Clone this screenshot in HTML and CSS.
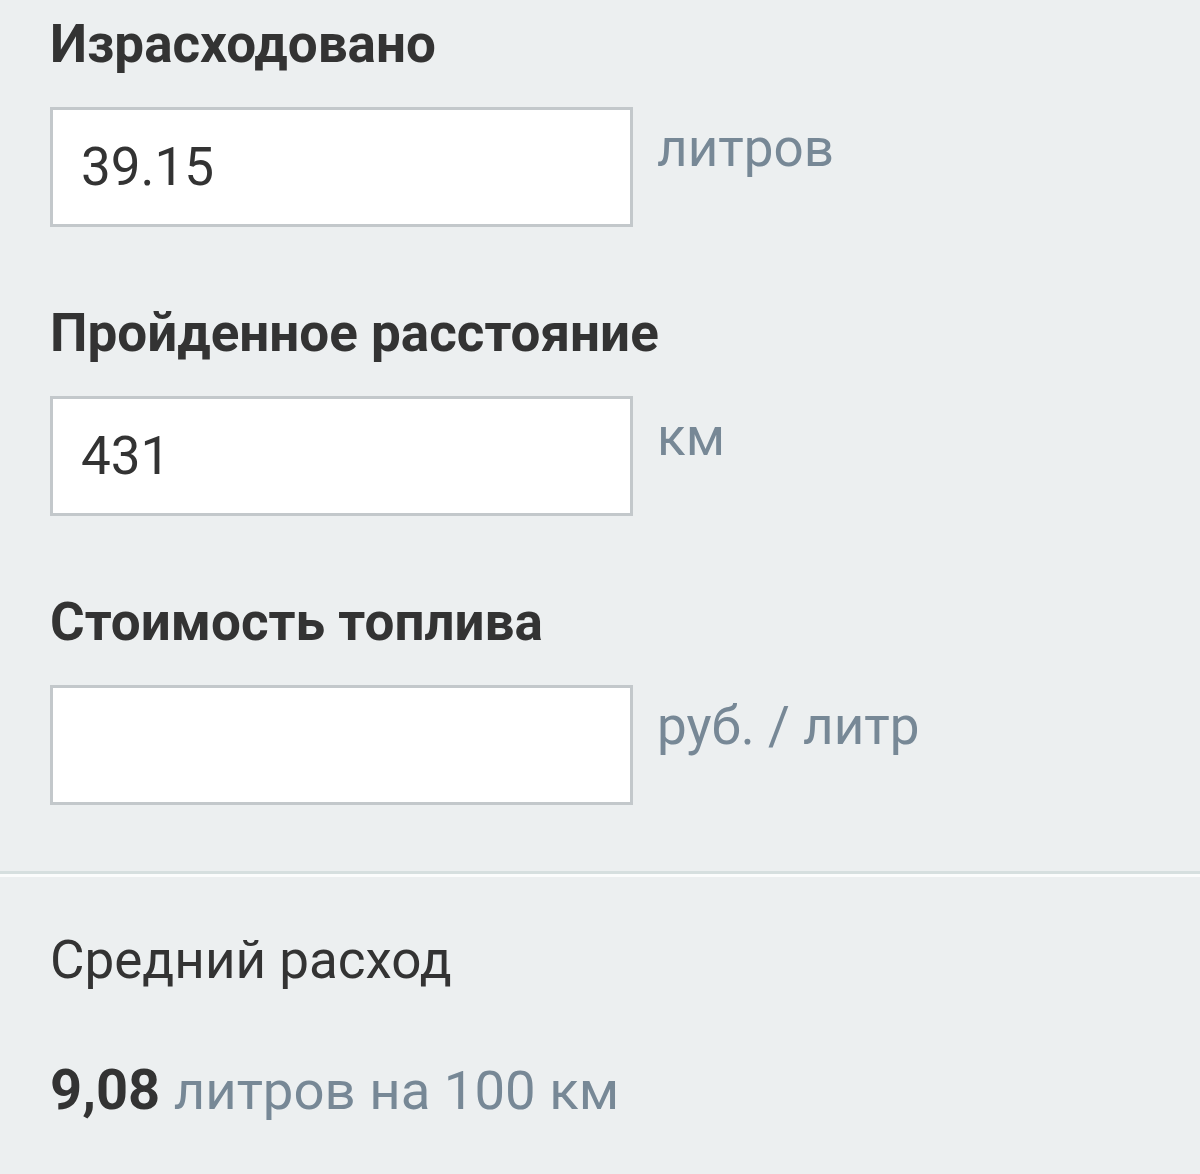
FILE: index.html
```html
<!DOCTYPE html>
<html lang="ru">
<head>
    <meta charset="UTF-8">
    <title>Расход топлива</title>
    <link rel="stylesheet" href="styles.css">
</head>
<body>
    <div class="calc-form">
        <div class="field">
            <label class="field-label" for="fuel">Израсходовано</label>
            <div class="field-row">
                <input class="field-input" type="text" id="fuel" value="39.15">
                <span class="field-unit">литров</span>
            </div>
        </div>
        <div class="field">
            <label class="field-label" for="distance">Пройденное расстояние</label>
            <div class="field-row">
                <input class="field-input" type="text" id="distance" value="431">
                <span class="field-unit">км</span>
            </div>
        </div>
        <div class="field">
            <label class="field-label" for="price">Стоимость топлива</label>
            <div class="field-row">
                <input class="field-input" type="text" id="price" value="">
                <span class="field-unit">руб. / литр</span>
            </div>
        </div>
    </div>
    <div class="divider"></div>
    <div class="result">
        <div class="result-title">Средний расход</div>
        <div class="result-value"><b>9,08</b> литров на 100 км</div>
    </div>
</body>
</html>
```

FILE: styles.css
```css
body {
    margin: 0;
    padding: 0;
    background: #eceff0;
    font-family: Roboto, "Liberation Sans", sans-serif;
    color: #333;
}
.calc-form {
    padding: 14px 50px 0 50px;
}
.field {
    margin-bottom: 76px;
}
.field:last-child {
    margin-bottom: 0;
}
.field-label {
    display: block;
    font-size: 53px;
    font-weight: bold;
    line-height: 60px;
    margin-bottom: 33px;
    color: #333;
}
.field-row {
    display: flex;
    align-items: flex-start;
}
.field-input {
    box-sizing: border-box;
    width: 583px;
    height: 120px;
    border: 3px solid #c3c8cb;
    background: #fff;
    padding: 0 0 0 28px;
    margin: 0;
    font-family: Roboto, "Liberation Sans", sans-serif;
    font-size: 53px;
    color: #333;
    outline: none;
    border-radius: 0;
}
.field-unit {
    margin-left: 24px;
    padding-top: 9px;
    font-size: 53px;
    line-height: 64px;
    color: #778896;
}
.divider {
    margin-top: 66px;
    border-top: 3px solid #d6dfdf;
    border-bottom: 3px solid #fbfcfc;
}
.result {
    padding: 53px 50px 0 50px;
}
.result-title {
    font-size: 53px;
    line-height: 60px;
    color: #333;
}
.result-value {
    margin-top: 70px;
    font-size: 54.5px;
    line-height: 60px;
    color: #778896;
}
.result-value b {
    font-size: 56px;
    color: #333;
}
```
